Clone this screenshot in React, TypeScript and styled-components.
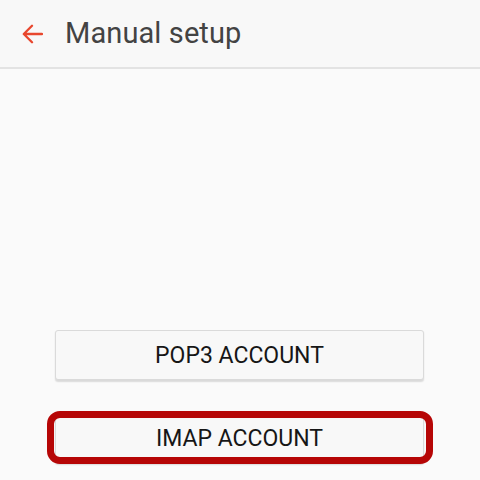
import React from "react";
import styled, { createGlobalStyle } from "styled-components";

const Global = createGlobalStyle`
  html, body { margin: 0; padding: 0; background: #fafafa; }
  body { font-family: Roboto, "Liberation Sans", sans-serif; }
`;

const Screen = styled.div`
  width: 480px;
  height: 480px;
  display: flex;
  flex-direction: column;
  background: #fafafa;
  overflow: hidden;
`;

const Header = styled.header`
  height: 67px;
  display: flex;
  align-items: center;
  padding-left: 22px;
  gap: 22px;
  background: #f8f8f8;
  border-bottom: 2px solid #e3e3e3;
  flex-shrink: 0;
`;

const BackButton = styled.button`
  width: 21px;
  height: 20px;
  padding: 0;
  border: 0;
  background: none;
  display: flex;
  align-items: center;
  justify-content: center;
  margin-top: 1px;
`;

const Title = styled.h1`
  margin: 0;
  font-family: Roboto, "Liberation Sans", sans-serif;
  font-weight: 400;
  font-size: 29px;
  color: #434343;
  letter-spacing: 0.1px;
  line-height: 1;
`;

const Body = styled.main`
  flex: 1;
  display: flex;
  flex-direction: column;
  padding: 261px 56px 0 55px;
  gap: 33px;
`;

const AccountButton = styled.button`
  position: relative;
  height: 50px;
  width: 100%;
  border: 1px solid #dadada;
  border-radius: 3px;
  background: #f8f8f8;
  box-shadow: 0 1.5px 1.5px rgba(0, 0, 0, 0.13);
  font-family: Roboto, "Liberation Sans", sans-serif;
  font-size: 23px;
  font-weight: 400;
  color: #161616;
  text-transform: uppercase;
  display: flex;
  align-items: center;
  justify-content: center;
  padding: 0;
`;

const Highlight = styled.span`
  position: absolute;
  top: -3px;
  bottom: -2px;
  left: -9px;
  right: -10px;
  border: 7px solid #b60606;
  border-radius: 13px;
  pointer-events: none;
`;

const ArrowIcon = () => (
  <svg width="21" height="20" viewBox="0 0 21 20" fill="none">
    <path
      d="M20 10H2.5M10 1.8L1.8 10L10 18.2"
      stroke="#e8472e"
      strokeWidth="2.3"
      strokeLinecap="round"
      strokeLinejoin="round"
    />
  </svg>
);

export default function App() {
  return (
    <>
      <Global />
      <Screen>
        <Header>
          <BackButton aria-label="Back">
            <ArrowIcon />
          </BackButton>
          <Title>Manual setup</Title>
        </Header>
        <Body>
          <AccountButton>POP3 account</AccountButton>
          <AccountButton>
            IMAP account
            <Highlight />
          </AccountButton>
        </Body>
      </Screen>
    </>
  );
}
